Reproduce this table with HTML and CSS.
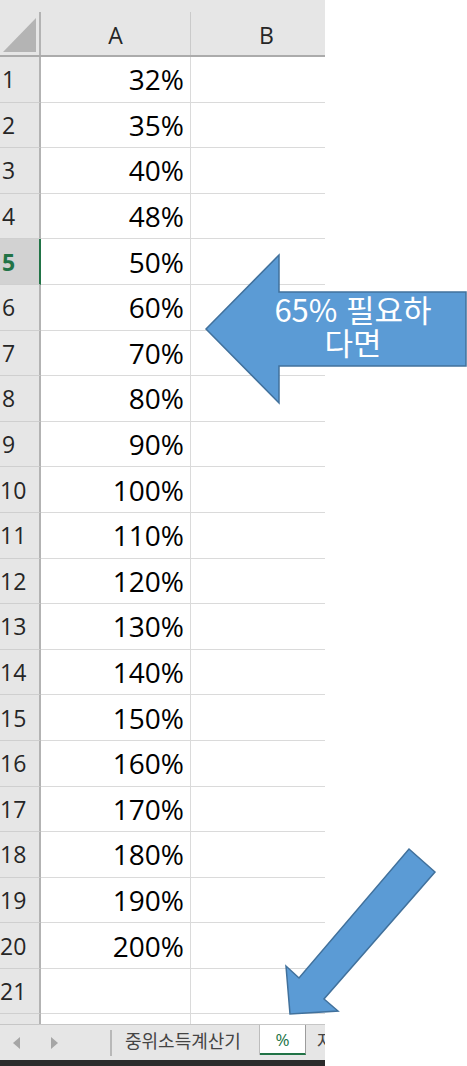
FILE: index.html
```html
<!DOCTYPE html>
<html lang="ko">
<head>
<meta charset="utf-8">
<title>Sheet</title>
<link rel="stylesheet" href="styles.css">
</head>
<body>
<div class="sheet">
  <div class="grid">
    <div class="hd corner"><div class="lbl"><svg width="33" height="34" viewBox="0 0 33 34"><polygon points="0,34 33,34 33,0" fill="#b4b4b4"/></svg></div></div>
    <div class="hd"><div class="lbl">A</div></div>
    <div class="hd"><div class="lbl">B</div></div>

    <div class="rh">1</div><div class="c">32%</div><div class="c"></div>
    <div class="rh">2</div><div class="c">35%</div><div class="c"></div>
    <div class="rh">3</div><div class="c">40%</div><div class="c"></div>
    <div class="rh">4</div><div class="c">48%</div><div class="c"></div>
    <div class="rh sel">5</div><div class="c">50%</div><div class="c"></div>
    <div class="rh">6</div><div class="c">60%</div><div class="c"></div>
    <div class="rh">7</div><div class="c">70%</div><div class="c"></div>
    <div class="rh">8</div><div class="c">80%</div><div class="c"></div>
    <div class="rh">9</div><div class="c">90%</div><div class="c"></div>
    <div class="rh two">10</div><div class="c">100%</div><div class="c"></div>
    <div class="rh two">11</div><div class="c">110%</div><div class="c"></div>
    <div class="rh two">12</div><div class="c">120%</div><div class="c"></div>
    <div class="rh two">13</div><div class="c">130%</div><div class="c"></div>
    <div class="rh two">14</div><div class="c">140%</div><div class="c"></div>
    <div class="rh two">15</div><div class="c">150%</div><div class="c"></div>
    <div class="rh two">16</div><div class="c">160%</div><div class="c"></div>
    <div class="rh two">17</div><div class="c">170%</div><div class="c"></div>
    <div class="rh two">18</div><div class="c">180%</div><div class="c"></div>
    <div class="rh two">19</div><div class="c">190%</div><div class="c"></div>
    <div class="rh two">20</div><div class="c">200%</div><div class="c"></div>
    <div class="rh two">21</div><div class="c"></div><div class="c"></div>
    <div class="rh two"></div><div class="c"></div><div class="c"></div>
  </div>
  <div class="tabbar">
    <div class="nav">
      <svg width="8" height="12" viewBox="0 0 8 12"><polygon points="7,0 7,12 0,6" fill="#a6a6a6"/></svg>
      <svg width="8" height="12" viewBox="0 0 8 12"><polygon points="1,0 1,12 8,6" fill="#a6a6a6"/></svg>
    </div>
    <div class="sep"></div>
    <div class="tab tab1">중위소득계산기</div>
    <div class="tab active">%</div>
    <div class="tab tab3">자료</div>
  </div>
  <div class="status"></div>
</div>

<svg class="shapes" width="467" height="1066" viewBox="0 0 467 1066">
  <polygon points="206,329 279,255 279,292 466,292 466,366 279,366 279,403" fill="#5b9bd5" stroke="#41719c" stroke-width="1.5" stroke-linejoin="miter"/>
  <polygon points="409,849 435,872 324,999 338,1011 290,1014 286,966 299,978" fill="#5b9bd5" stroke="#41719c" stroke-width="1.5"/>
</svg>
<div class="callout"><div class="line">65% 필요하</div><div class="line">다면</div></div>
</body>
</html>
```

FILE: styles.css
```css
html, body {
  margin: 0;
  padding: 0;
}
body {
  width: 467px;
  height: 1066px;
  background: #ffffff;
  position: relative;
  overflow: hidden;
  font-family: "Open Sans", "Noto Sans CJK KR", sans-serif;
}
.sheet {
  width: 325px;
  height: 1066px;
  overflow: hidden;
  display: flex;
  flex-direction: column;
}
.grid {
  flex: none;
  width: 343px;
  height: 1024px;
  overflow: hidden;
  display: grid;
  grid-template-columns: 41px 150px 152px;
  grid-template-rows: 57px;
  grid-auto-rows: 45.6px;
}
.hd {
  background: #e6e6e6;
  border-bottom: 2px solid #ababab;
  box-sizing: border-box;
  display: flex;
  flex-direction: column;
}
.hd .lbl {
  flex: 1;
  margin-top: 12px;
  padding-top: 2px;
  border-right: 1px solid #cacaca;
  display: flex;
  align-items: center;
  justify-content: center;
  font-size: 23px;
  color: #262626;
}
.hd.corner .lbl {
  border-right: 2px solid #b3b3b3;
  justify-content: flex-end;
  align-items: flex-end;
  padding: 0 3px 3px 0;
}
.hd.corner svg {
  display: block;
}
.rh {
  background: #e6e6e6;
  border-right: 2px solid #b3b3b3;
  border-bottom: 1px solid #cfcfcf;
  box-sizing: border-box;
  display: flex;
  align-items: center;
  padding-left: 2px;
  font-size: 23px;
  color: #262626;
}
.rh.two {
  padding-left: 0;
}
.rh.sel {
  background: #d2d2d2;
  border-right-color: #217346;
  color: #217346;
  font-weight: 700;
}
.c {
  border-right: 1px solid #dadada;
  border-bottom: 1px solid #dadada;
  box-sizing: border-box;
  display: flex;
  align-items: center;
  justify-content: flex-end;
  padding-right: 6px;
  font-size: 28px;
  color: #000;
}
.tabbar {
  flex: none;
  height: 36px;
  box-sizing: border-box;
  border-top: 1px solid #c6c6c6;
  background: #e6e6e6;
  display: flex;
  align-items: flex-start;
  white-space: nowrap;
}
.nav {
  width: 110px;
  height: 35px;
  flex: none;
  display: flex;
  align-items: center;
  padding-left: 13px;
  gap: 29px;
  box-sizing: border-box;
}
.nav svg {
  display: block;
}
.sep {
  flex: none;
  width: 2px;
  height: 26px;
  margin-top: 5px;
  background: #b8b8b8;
}
.tab {
  flex: none;
  height: 30px;
  box-sizing: border-box;
  display: flex;
  align-items: center;
  font-family: "Noto Sans CJK KR", sans-serif;
  font-size: 18px;
  color: #444444;
}
.tab1 {
  width: 148px;
  padding-left: 13px;
  border-right: 1px solid #bdbdbd;
}
.tab.active {
  width: 46px;
  justify-content: center;
  background: #ffffff;
  border-bottom: 2px solid #217346;
  border-right: 1px solid #9c9c9c;
  color: #217346;
  font-family: "Open Sans", sans-serif;
  font-size: 17px;
}
.tab3 {
  padding-left: 11px;
}
.status {
  flex: none;
  height: 6px;
  background: #2b2b2b;
}
.shapes {
  position: absolute;
  left: 0;
  top: 0;
  pointer-events: none;
}
.callout {
  position: absolute;
  left: 240px;
  top: 292px;
  width: 226px;
  text-align: center;
  color: #ffffff;
  font-family: "Noto Sans CJK KR", sans-serif;
  font-size: 31px;
}
.callout .line {
  height: 33px;
  line-height: 33px;
  white-space: nowrap;
}
```
